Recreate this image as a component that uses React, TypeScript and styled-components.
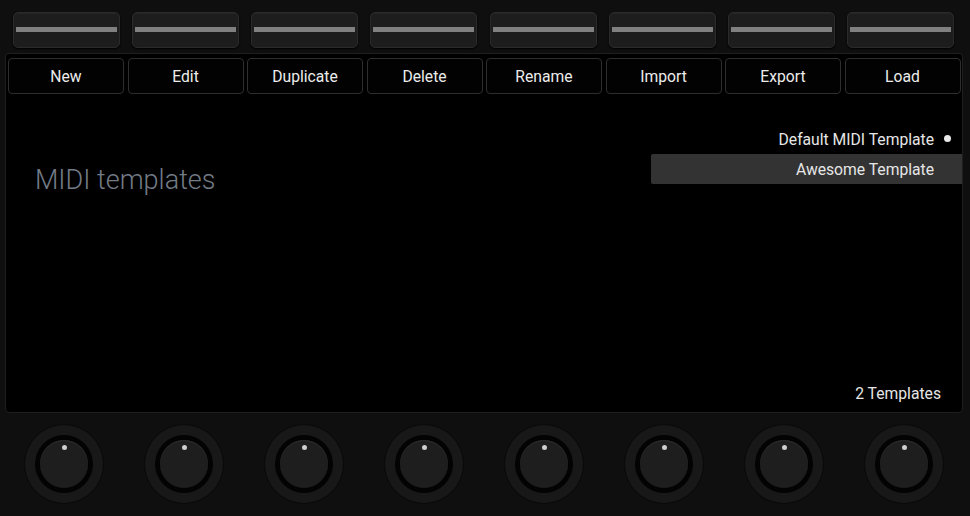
import React from 'react';
import styled, {createGlobalStyle} from 'styled-components';

const GlobalStyle = createGlobalStyle`
  html, body {
    margin: 0;
    padding: 0;
    background-color: #0f0f0f;
  }
  * {
    box-sizing: border-box;
  }
`

const Device = styled.div`
  width: 970px;
  height: 516px;
  background-color: #0f0f0f;
  font-family: Roboto, "Liberation Sans", sans-serif;
  display: flex;
  flex-direction: column;
  overflow: hidden;
`

const PadRow = styled.div`
  display: grid;
  grid-template-columns: repeat(8, 107px);
  column-gap: 12.14px;
  padding: 12px 0 0 13px;
`

const Pad = styled.div`
  height: 36px;
  background-color: #1d1d1d;
  border: 1px solid #2a2a2a;
  border-radius: 5px;
  box-shadow: inset 0 1px 0 #262626, 0 1px 2px #000;
  padding: 14px 2px 0 2px;
`

const PadBar = styled.div`
  height: 5px;
  background-color: #808080;
`

const Screen = styled.div`
  margin: 5px 0 0 5px;
  width: 958px;
  height: 360px;
  background-color: #000;
  border: 1px solid #1f1f1f;
  border-radius: 4px;
  display: flex;
  flex-direction: column;
`

const ActionRow = styled.div`
  display: grid;
  grid-template-columns: repeat(8, 116px);
  column-gap: 3.5px;
  padding: 4px 0 0 2px;
`

const ActionButton = styled.div`
  height: 36px;
  border: 1px solid #2e2e2e;
  border-radius: 4px;
  background-color: #020202;
  color: #ececec;
  font-size: 15.7px;
  display: flex;
  justify-content: center;
  align-items: center;
`

const Body = styled.div`
  flex: 1;
  display: flex;
  justify-content: space-between;
`

const Title = styled.div`
  padding: 69px 0 0 29px;
  font-size: 27px;
  font-weight: 300;
  line-height: 34px;
  color: #737b87;
`

const TemplateList = styled.div`
  margin-top: 30px;
  width: 311px;
  display: flex;
  flex-direction: column;
`

const TemplateRow = styled.div<{selected?: boolean}>`
  position: relative;
  height: 30px;
  padding-right: 28px;
  display: flex;
  justify-content: flex-end;
  align-items: center;
  font-size: 15.7px;
  color: #e6e6e6;
  background-color: ${p => p.selected ? '#333333' : 'transparent'};
  border-radius: ${p => p.selected ? '2px 0 0 2px' : '0'};
`

const ActiveDot = styled.span`
  position: absolute;
  right: 11px;
  top: 11px;
  width: 7px;
  height: 7px;
  border-radius: 50%;
  background-color: #e8e8e8;
`

const Footer = styled.div`
  padding: 0 21px 8px 0;
  text-align: right;
  font-size: 15.7px;
  line-height: 20px;
  color: #e6e6e6;
`

const KnobRow = styled.div`
  display: flex;
  gap: 42px;
  padding: 12px 0 0 25px;
`

const KnobOuter = styled.div`
  width: 78px;
  height: 78px;
  border-radius: 50%;
  background-color: #181818;
  box-shadow: 0 0 0 1px #0a0a0a;
  display: flex;
  justify-content: center;
  align-items: center;
`

const KnobWell = styled.div`
  width: 58px;
  height: 58px;
  border-radius: 50%;
  background-color: #030303;
  display: flex;
  justify-content: center;
  align-items: center;
`

const KnobCap = styled.div`
  position: relative;
  width: 48px;
  height: 48px;
  border-radius: 50%;
  background-color: #1e1e1e;
  box-shadow: inset 0 1px 1px #2e2e2e;
`

const KnobDot = styled.span`
  position: absolute;
  left: 21.5px;
  top: 4.5px;
  width: 5px;
  height: 5px;
  border-radius: 50%;
  background-color: #cfcfcf;
`

const actions = ['New', 'Edit', 'Duplicate', 'Delete', 'Rename', 'Import', 'Export', 'Load'];

function App() {
  const slots = Array(8).fill(0).map((a, i) => i);
  return (
    <Device>
      <GlobalStyle />
      <PadRow>
        {slots.map(i => (
          <Pad key={`pad${i}`}>
            <PadBar />
          </Pad>
        ))}
      </PadRow>
      <Screen>
        <ActionRow>
          {actions.map(a => (
            <ActionButton key={a}>{a}</ActionButton>
          ))}
        </ActionRow>
        <Body>
          <Title>MIDI templates</Title>
          <TemplateList>
            <TemplateRow>
              Default MIDI Template
              <ActiveDot />
            </TemplateRow>
            <TemplateRow selected>Awesome Template</TemplateRow>
          </TemplateList>
        </Body>
        <Footer>2 Templates</Footer>
      </Screen>
      <KnobRow>
        {slots.map(i => (
          <KnobOuter key={`knob${i}`}>
            <KnobWell>
              <KnobCap>
                <KnobDot />
              </KnobCap>
            </KnobWell>
          </KnobOuter>
        ))}
      </KnobRow>
    </Device>
  )
}

export default App
